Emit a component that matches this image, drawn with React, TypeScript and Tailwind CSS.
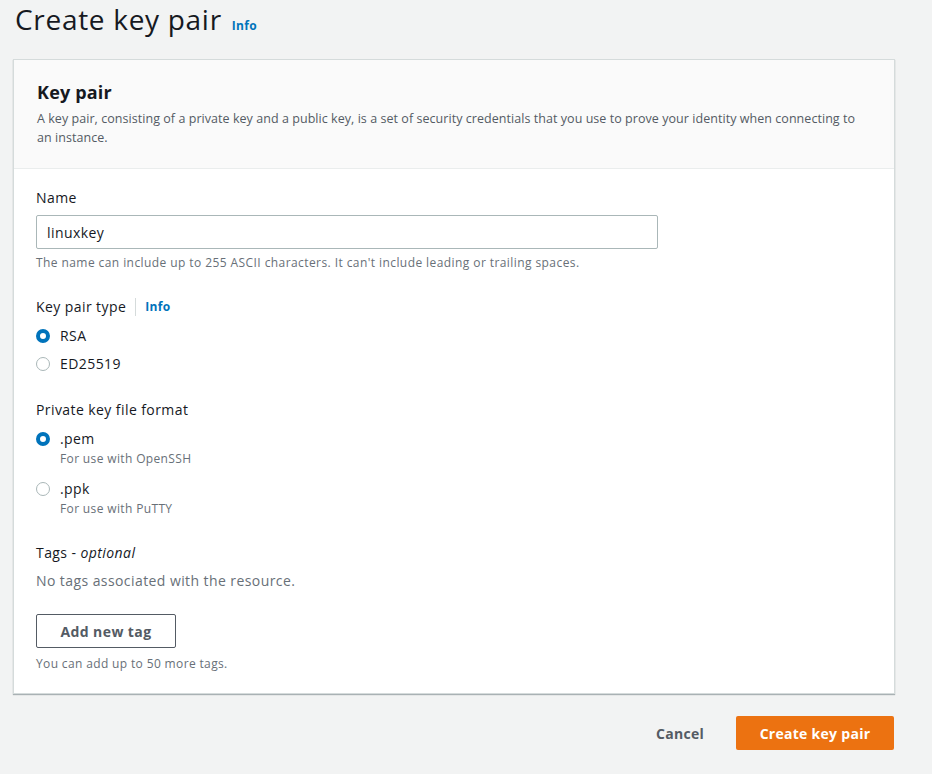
import React from "react";

function Radio({ checked }: { checked: boolean }) {
  return checked ? (
    <span className="mt-[3px] box-border inline-block h-[14px] w-[14px] shrink-0 rounded-full border-[4px] border-[#0073bb] bg-white" />
  ) : (
    <span className="mt-[3px] box-border inline-block h-[14px] w-[14px] shrink-0 rounded-full border-[1.5px] border-[#aab7b8] bg-white" />
  );
}

function RadioRow({ checked, label, desc }: { checked: boolean; label: string; desc?: string }) {
  return (
    <div className="flex gap-[10px]">
      <Radio checked={checked} />
      <div className="flex flex-col">
        <span className="text-[14px] leading-[20px] tracking-[0.03em] text-[#16191f]">{label}</span>
        {desc && <span className="text-[12px] leading-[20px] tracking-[0.03em] text-[#687078]">{desc}</span>}
      </div>
    </div>
  );
}

export default function App() {
  return (
    <div
      className="min-h-[774px] w-[932px] bg-[#f2f3f3] text-[#16191f]"
      style={{ fontFamily: '"Open Sans", "Noto Sans", Arial, sans-serif' }}
    >
      <div className="flex items-baseline gap-[10px] pl-[15px] pt-[0px]">
        <h1 className="text-[28px] leading-[38px] font-normal tracking-[0.025em] text-[#16191f]">Create key pair</h1>
        <span className="text-[12px] font-bold tracking-[0.03em] text-[#0073bb]">Info</span>
      </div>

      <div className="mx-[13px] mt-[21px] w-[882px] border border-[#d5dbdb] bg-white shadow-[0_1px_1px_0_rgba(0,28,36,0.3)]">
        <div className="border-b border-[#eaeded] bg-[#fafafa] px-[23px] pt-[19px] pb-[21px]">
          <h2 className="text-[18px] leading-[26px] font-bold tracking-[0.01em] text-[#16191f]">Key pair</h2>
          <p className="mt-[4px] text-[12.5px] leading-[19px] tracking-[0.004em] text-[#545b64]">
            A key pair, consisting of a private key and a public key, is a set of security credentials that you use to prove your identity when connecting to an instance.
          </p>
        </div>

        <div className="px-[22px] pt-[19px] pb-[21px]">
          <div className="text-[14px] leading-[20px] tracking-[0.03em] text-[#16191f]">Name</div>
          <div className="mt-[7px] flex h-[34px] w-[622px] items-center rounded-[2px] border border-[#aab7b8] px-[10px] text-[14px] tracking-[0.03em] text-[#16191f]">
            linuxkey
          </div>
          <div className="mt-[6px] text-[12px] leading-[16px] tracking-[0.035em] text-[#687078]">
            The name can include up to 255 ASCII characters. It can't include leading or trailing spaces.
          </div>

          <div className="mt-[26px] flex items-center">
            <span className="text-[14px] leading-[20px] tracking-[0.03em] text-[#16191f]">Key pair type</span>
            <span className="mx-[9px] h-[18px] w-px bg-[#d5dbdb]" />
            <span className="text-[12px] font-bold tracking-[0.03em] text-[#0073bb]">Info</span>
          </div>
          <div className="mt-[9px] flex flex-col gap-[8px]">
            <RadioRow checked label="RSA" />
            <RadioRow checked={false} label="ED25519" />
          </div>

          <div className="mt-[26px] text-[14px] leading-[20px] tracking-[0.03em] text-[#16191f]">Private key file format</div>
          <div className="mt-[9px] flex flex-col gap-[10px]">
            <RadioRow checked label=".pem" desc="For use with OpenSSH" />
            <RadioRow checked={false} label=".ppk" desc="For use with PuTTY" />
          </div>

          <div className="mt-[24px] text-[14px] leading-[20px] tracking-[0.03em] text-[#16191f]">
            Tags - <span className="italic">optional</span>
          </div>
          <div className="mt-[8px] text-[14px] leading-[20px] tracking-[0.03em] text-[#687078]">No tags associated with the resource.</div>
          <div className="mt-[23px] flex h-[34px] w-[140px] items-center justify-center rounded-[2px] border border-[#545b64] text-[14px] font-bold tracking-[0.03em] text-[#545b64]">
            Add new tag
          </div>
          <div className="mt-[8px] text-[12px] leading-[16px] tracking-[0.03em] text-[#687078]">You can add up to 50 more tags.</div>
        </div>
      </div>

      <div className="mt-[22px] flex items-center justify-end gap-[32px] pr-[38px]">
        <span className="text-[14px] font-bold tracking-[0.02em] text-[#545b64]">Cancel</span>
        <div className="flex h-[34px] w-[158px] items-center justify-center rounded-[2px] bg-[#ec7211] text-[14px] font-bold tracking-[0.02em] text-white">
          Create key pair
        </div>
      </div>
    </div>
  );
}
